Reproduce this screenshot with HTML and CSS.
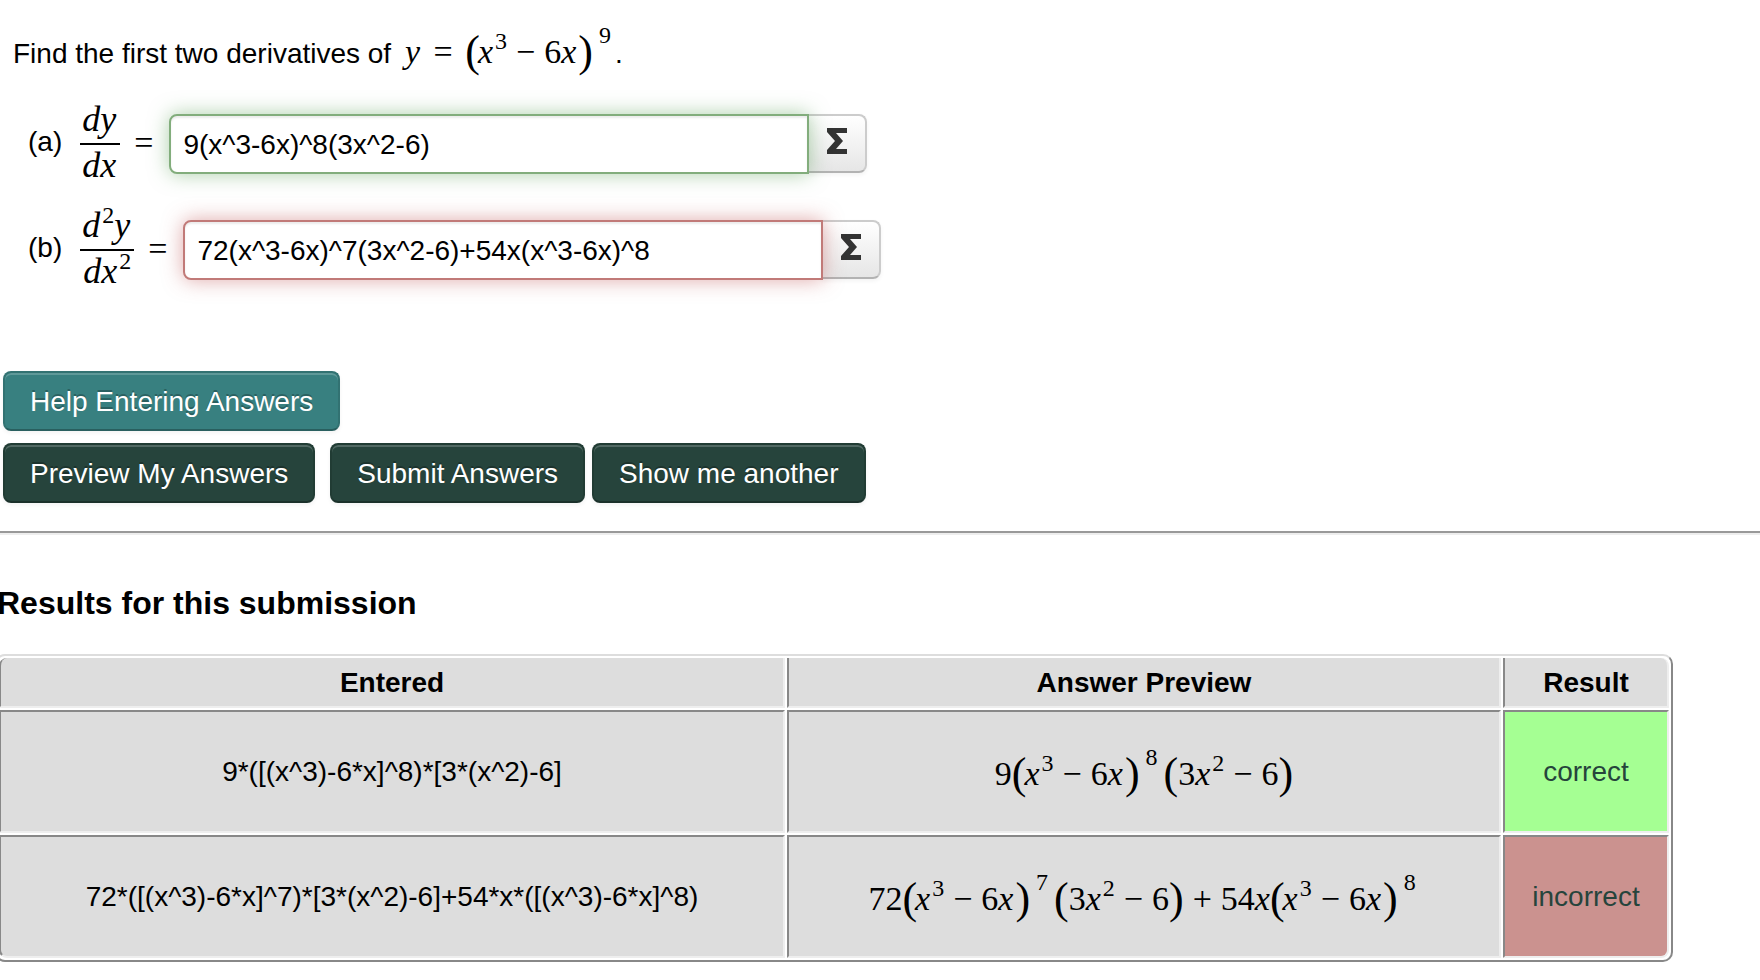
FILE: index.html
```
<!DOCTYPE html>
<html lang="en">
<head>
    <meta charset="UTF-8">
    <meta name="viewport" content="width=device-width, initial-scale=1.0">
    <title>Derivatives</title>
    <link rel="stylesheet" href="styles.css">
</head>
<body>
    <form class="problem" onsubmit="return false">
        <p class="question">Find the first two derivatives of <span class="math"><i>y</i> <span class="eq">=</span> <span class="paren">(</span><i>x</i><sup>3</sup><span class="op">−</span>6<i>x</i><span class="paren close">)</span><sup class="power">9</sup></span>.</p>

        <div class="answer">
            <label for="answer1">(a)</label>
            <span class="math frac"><span class="num"><i>dy</i></span><span class="den"><i>dx</i></span></span>
            <span class="math">=</span>
            <div class="input-group">
                <input class="codeshard correct" type="text" id="answer1" value="9(x^3-6x)^8(3x^2-6)">
                <button class="editor" type="button" aria-label="Equation editor">
                    <svg width="20" height="26" viewBox="0 0 20 26"><path d="M0 0H20V5H9L16 13L9 21H20V26H0V22L8 13L0 4Z" fill="#333"/></svg>
                </button>
            </div>
        </div>

        <div class="answer">
            <label for="answer2">(b)</label>
            <span class="math frac"><span class="num"><i>d</i><sup>2</sup><i>y</i></span><span class="den"><i>dx</i><sup>2</sup></span></span>
            <span class="math">=</span>
            <div class="input-group">
                <input class="codeshard incorrect" type="text" id="answer2" value="72(x^3-6x)^7(3x^2-6)+54x(x^3-6x)^8">
                <button class="editor" type="button" aria-label="Equation editor">
                    <svg width="20" height="26" viewBox="0 0 20 26"><path d="M0 0H20V5H9L16 13L9 21H20V26H0V22L8 13L0 4Z" fill="#333"/></svg>
                </button>
            </div>
        </div>

        <div class="actions">
            <button class="btn help" type="button">Help Entering Answers</button>
            <div class="submit-row">
                <button class="btn preview" type="submit">Preview My Answers</button>
                <button class="btn" type="submit">Submit Answers</button>
                <button class="btn" type="submit">Show me another</button>
            </div>
        </div>
    </form>

    <hr>

    <section class="results">
        <h3>Results for this submission</h3>
        <table>
            <colgroup>
                <col>
                <col class="col-preview">
                <col class="col-result">
            </colgroup>
            <thead>
                <tr>
                    <th>Entered</th>
                    <th>Answer Preview</th>
                    <th>Result</th>
                </tr>
            </thead>
            <tbody>
                <tr>
                    <td>9*([(x^3)-6*x]^8)*[3*(x^2)-6]</td>
                    <td><span class="math">9<span class="paren">(</span><i>x</i><sup>3</sup><span class="op">−</span>6<i>x</i><span class="paren close">)</span><sup class="power">8</sup><span class="paren gap">(</span>3<i>x</i><sup>2</sup><span class="op">−</span>6<span class="paren close">)</span></span></td>
                    <td class="result-correct"><a href="#answer1">correct</a></td>
                </tr>
                <tr>
                    <td>72*([(x^3)-6*x]^7)*[3*(x^2)-6]+54*x*([(x^3)-6*x]^8)</td>
                    <td><span class="math">72<span class="paren">(</span><i>x</i><sup>3</sup><span class="op">−</span>6<i>x</i><span class="paren close">)</span><sup class="power">7</sup><span class="paren gap">(</span>3<i>x</i><sup>2</sup><span class="op">−</span>6<span class="paren close">)</span><span class="op">+</span>54<i>x</i><span class="paren tight">(</span><i>x</i><sup>3</sup><span class="op">−</span>6<i>x</i><span class="paren close">)</span><sup class="power">8</sup></span></td>
                    <td class="result-incorrect"><a href="#answer2">incorrect</a></td>
                </tr>
            </tbody>
        </table>
    </section>
</body>
</html>
```
FILE: styles.css
```
body {
    margin: 0;
    background: #fff;
    color: #000;
    font-family: "Liberation Sans", Arial, sans-serif;
    font-size: 28px;
    overflow-x: hidden;
}
.question {
    margin: 0;
    padding: 24px 13px 7px;
    line-height: 60px;
}

/* math */
.math {
    font-family: "Liberation Serif", "Times New Roman", serif;
    font-size: 34px;
    line-height: 40px;
    white-space: nowrap;
}
.math i {
    margin-right: 2px;
}
.math sup {
    font-size: 24px;
    line-height: 0;
    vertical-align: 14px;
}
.math .power {
    margin: 0 4px 0 6px;
    vertical-align: 20px;
}
.question .math {
    margin-left: 6px;
}
.eq {
    margin: 0 4px 0 3px;
}
.op {
    margin: 0 9px;
}
.paren {
    font-size: 44px;
    line-height: 0;
    vertical-align: -3px;
    margin-right: -2px;
}
.paren.close {
    margin-right: 0;
}
.paren.tight {
    margin-left: -2px;
}
.paren.gap {
    margin-left: 2px;
    margin-right: 0;
}
.frac {
    display: flex;
    flex-direction: column;
    text-align: center;
    font-size: 36px;
}
.num {
    padding: 0 2px 4px;
    border-bottom: 2px solid #000;
}
.den {
    padding: 0 2px;
}

/* answer rows */
.answer {
    display: flex;
    align-items: center;
    height: 106px;
    padding-left: 28px;
}
.answer label {
    padding-bottom: 4px;
}
.answer .math {
    padding-bottom: 2px;
}
.answer .frac {
    margin: 0 14px 0 18px;
    padding-bottom: 5px;
}
.input-group {
    display: flex;
    margin-left: 16px;
}
.codeshard {
    box-sizing: border-box;
    width: 640px;
    height: 60px;
    padding: 2px 12px 0;
    border: 2px solid;
    border-radius: 8px 0 0 8px;
    background: #fff;
    color: #000;
    font-family: inherit;
    font-size: 28px;
    outline: none;
    position: relative;
}
.codeshard.correct {
    border-color: #82ad7c;
    box-shadow: inset 0 2px 2px rgba(0, 0, 0, 0.08), 0 0 20px rgba(90, 160, 85, 0.5);
}
.codeshard.incorrect {
    border-color: #c17a78;
    box-shadow: inset 0 2px 2px rgba(0, 0, 0, 0.08), 0 0 20px rgba(191, 84, 84, 0.5);
}
.editor {
    display: flex;
    align-items: center;
    justify-content: center;
    width: 60px;
    height: 59px;
    margin-left: -2px;
    padding: 0 0 6px;
    border: 2px solid #ccc;
    border-bottom-color: #b3b3b3;
    border-radius: 0 8px 8px 0;
    background: linear-gradient(#fff, #e6e6e6);
    box-shadow: 0 2px 4px rgba(0, 0, 0, 0.05);
    cursor: pointer;
}

/* buttons */
.actions {
    display: flex;
    flex-direction: column;
    align-items: flex-start;
    gap: 12px;
    padding: 68px 3px 28px;
}
.submit-row {
    display: flex;
    gap: 7px;
}
.btn {
    height: 60px;
    padding: 2px 25px 0;
    border: 2px solid #213c34;
    border-bottom-color: #1b312b;
    border-radius: 8px;
    background: #26443c;
    color: #fff;
    font-family: inherit;
    font-size: 28px;
    text-shadow: 0 -2px 0 rgba(0, 0, 0, 0.25);
    box-shadow: inset 0 2px 0 rgba(255, 255, 255, 0.2), 0 2px 4px rgba(0, 0, 0, 0.05);
    cursor: pointer;
}
.btn.help {
    border-color: #327272;
    border-bottom-color: #295f5f;
    background: #388080;
}
.btn.preview {
    margin-right: 8px;
}
hr {
    margin: 0;
    border: 0;
    border-top: 2px solid #999;
    border-bottom: 2px solid #eee;
}

/* results table */
.results {
    margin-left: -5px;
    padding-right: 87px;
}
h3 {
    margin: 0;
    padding: 44px 2px 27px;
    font-size: 32px;
    line-height: 48px;
}
table {
    width: 100%;
    table-layout: fixed;
    border: 2px solid #888;
    border-top-color: #ddd;
    border-left-color: #ddd;
    border-radius: 10px;
    border-collapse: separate;
    border-spacing: 2px;
    text-align: center;
}
.col-preview {
    width: 714px;
}
.col-result {
    width: 166px;
}
th, td {
    box-sizing: border-box;
    padding: 0;
    border: 2px solid #eee;
    border-left-color: #888;
    border-top-color: #888;
    background: #ddd;
}
th {
    height: 50px;
    border-top: 0;
    padding-top: 2px;
}
td {
    height: 123px;
}
td .math {
    display: inline-block;
    padding-top: 4px;
}
th:first-child {
    border-top-left-radius: 8px;
}
th:last-child {
    border-top-right-radius: 8px;
}
tr:last-child td:first-child {
    border-bottom-left-radius: 8px;
}
tr:last-child td:last-child {
    border-bottom-right-radius: 8px;
}
td.result-correct {
    background: #a5ff93;
}
td.result-incorrect {
    background: #cb928f;
}
td a {
    color: #26443c;
    text-decoration: none;
}
```
